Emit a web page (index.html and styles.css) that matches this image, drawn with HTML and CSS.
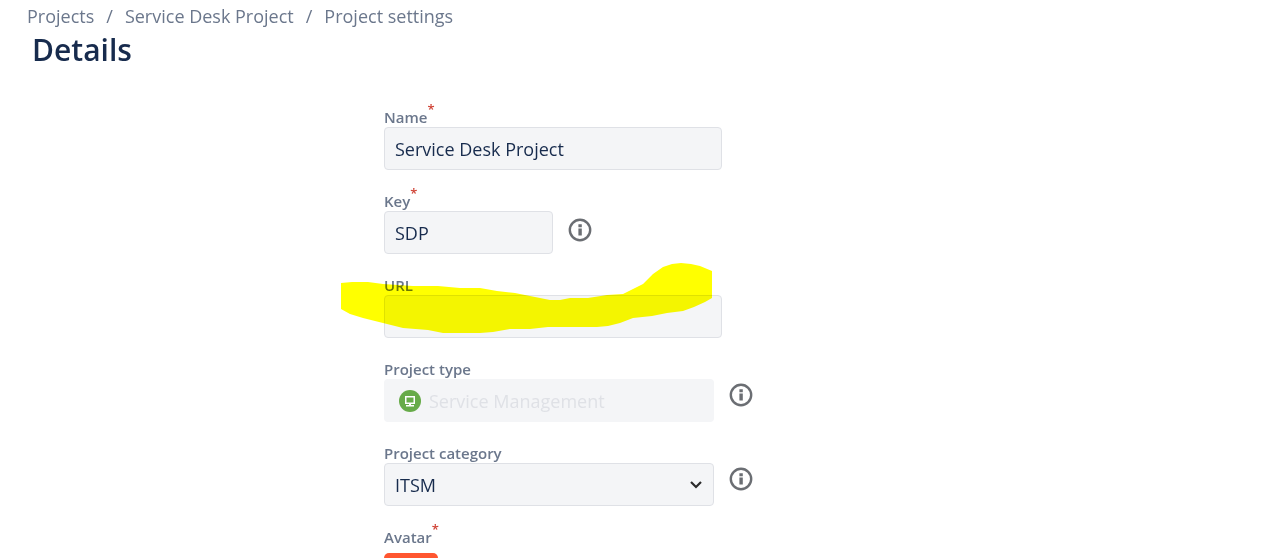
FILE: index.html
```html
<!DOCTYPE html>
<html lang="en">
<head>
    <meta charset="UTF-8">
    <meta name="viewport" content="width=device-width, initial-scale=1.0">
    <title>Details - Service Desk Project</title>
    <link rel="stylesheet" href="styles.css">
</head>
<body>
    <header class="page-header">
        <nav class="breadcrumbs" aria-label="Breadcrumbs">
            <a href="#">Projects</a>
            <span>/</span>
            <a href="#">Service Desk Project</a>
            <span>/</span>
            <a href="#">Project settings</a>
        </nav>
        <h1>Details</h1>
    </header>

    <form class="details-form">
        <div class="field">
            <label for="name">Name<span class="required">*</span></label>
            <input class="text-input" type="text" id="name" value="Service Desk Project">
        </div>

        <div class="field">
            <label for="key">Key<span class="required">*</span></label>
            <div class="row">
                <input class="text-input short" type="text" id="key" value="SDP">
                <button class="info" type="button" aria-label="About the key">
                    <svg width="24" height="24" viewBox="0 0 24 24">
                        <circle cx="12" cy="12" r="10.2" fill="none" stroke="#6b6e73" stroke-width="2.4"/>
                        <path d="M10.4 6.2h3.400v3h-3.400zM10.4 10.500h3.400v7h-3.400z" fill="#6b6e73"/>
                    </svg>
                </button>
            </div>
        </div>

        <div class="field">
            <label for="url">URL</label>
            <input class="text-input" type="text" id="url">
            <svg class="marker" width="371" height="71" viewBox="0 0 371 71">
                <path fill="#ffff00" d="M0 20L11 19H27L42 21L72 23H97L119 25H139L156 28L174 30L189 33L209 37H219L229 35L247 35L266 32L282 31L292 26L302 21L312 11L322 4L331 1L340 0L350 1L359 3L371 8V35L364 39L353 44L342 48L326 50L311 53L292 55L279 60L267 63L256 64H207L189 66H169L152 69L139 70H102L87 67L62 65L42 60L22 55L9 51L0 46Z"/>
            </svg>
        </div>

        <div class="field">
            <label for="type">Project type</label>
            <div class="row">
                <div class="type-box">
                    <svg width="22" height="22" viewBox="0 0 22 22">
                        <circle cx="11" cy="11" r="11" fill="#67ab49"/>
                        <path d="M6 6h10v8h-4v1h3v1.500H7V15h3v-1H6zM7.500 7.500v5h7v-5z" fill="#fff" fill-rule="evenodd"/>
                    </svg>
                    <input type="text" id="type" value="Service Management" disabled>
                </div>
                <button class="info" type="button" aria-label="About project types">
                    <svg width="24" height="24" viewBox="0 0 24 24">
                        <circle cx="12" cy="12" r="10.2" fill="none" stroke="#6b6e73" stroke-width="2.4"/>
                        <path d="M10.4 6.2h3.400v3h-3.400zM10.4 10.500h3.400v7h-3.400z" fill="#6b6e73"/>
                    </svg>
                </button>
            </div>
        </div>

        <div class="field">
            <label for="category">Project category</label>
            <div class="row">
                <div class="select-box">
                    <select class="text-input" id="category">
                        <option>ITSM</option>
                    </select>
                    <svg class="chevron" width="12" height="8" viewBox="0 0 12 8">
                        <path d="M1 1l5 5 5-5" fill="none" stroke="#2b2b2b" stroke-width="2.2"/>
                    </svg>
                </div>
                <button class="info" type="button" aria-label="About project categories">
                    <svg width="24" height="24" viewBox="0 0 24 24">
                        <circle cx="12" cy="12" r="10.2" fill="none" stroke="#6b6e73" stroke-width="2.4"/>
                        <path d="M10.4 6.2h3.400v3h-3.400zM10.4 10.500h3.400v7h-3.400z" fill="#6b6e73"/>
                    </svg>
                </button>
            </div>
        </div>

        <div class="field">
            <label for="avatar">Avatar<span class="required">*</span></label>
            <button class="avatar" type="button" id="avatar"></button>
        </div>
    </form>
</body>
</html>
```
FILE: styles.css
```css
* {
    box-sizing: border-box;
}

html {
    height: 100%;
    overflow: hidden;
}

body {
    margin: 0;
    font-family: "Open Sans", "Noto Sans", sans-serif;
    font-size: 18px;
    color: #172b4d;
    background-color: #fff;
}

.page-header {
    padding: 4px 27px 0;
}

.breadcrumbs {
    display: flex;
    gap: 12px;
    line-height: 24px;
    color: #6b778c;
}

.breadcrumbs a {
    color: inherit;
    text-decoration: none;
}

h1 {
    margin: 0 0 0 5px;
    font-size: 30px;
    font-weight: 600;
    line-height: 44px;
}

.details-form {
    display: flex;
    flex-direction: column;
    gap: 21px;
    padding: 35px 20px 0 384px;
}

.field {
    position: relative;
    display: flex;
    flex-direction: column;
    align-items: flex-start;
}

label {
    font-size: 15px;
    font-weight: 600;
    line-height: 20px;
    color: #6b778c;
}

.required {
    position: relative;
    top: -9px;
    font-size: 13px;
    line-height: 1;
    color: #d04437;
}

.row {
    display: flex;
    align-items: flex-start;
    gap: 15px;
}

.text-input {
    width: 338px;
    height: 43px;
    padding: 0 10px;
    font: inherit;
    color: #172b4d;
    background-color: #f4f5f7;
    border: 1px solid #dfe1e6;
    border-radius: 4px;
}

.short {
    width: 169px;
}

.info {
    display: flex;
    margin-top: 4px;
    padding: 0;
    background: none;
    border: none;
    cursor: pointer;
}

.short + .info {
    margin-top: 7px;
}

/* Highlighter stroke over the URL */
.marker {
    position: absolute;
    top: -12px;
    left: -43px;
    mix-blend-mode: multiply;
    pointer-events: none;
}

.type-box {
    display: flex;
    align-items: center;
    gap: 8px;
    width: 330px;
    height: 43px;
    padding: 0 15px;
    background-color: #f4f5f7;
    border-radius: 4px;
}

.type-box input {
    flex: 1;
    min-width: 0;
    padding: 0;
    font: inherit;
    color: #dfe1e6;
    background: none;
    border: none;
}

.select-box {
    position: relative;
    width: 330px;
}

.select-box .text-input {
    display: block;
    width: 100%;
    appearance: none;
}

.chevron {
    position: absolute;
    top: 18px;
    right: 12px;
    pointer-events: none;
}

.avatar {
    width: 54px;
    height: 54px;
    margin-top: 6px;
    background-color: #ff5630;
    border: none;
    border-radius: 5px;
}
```
